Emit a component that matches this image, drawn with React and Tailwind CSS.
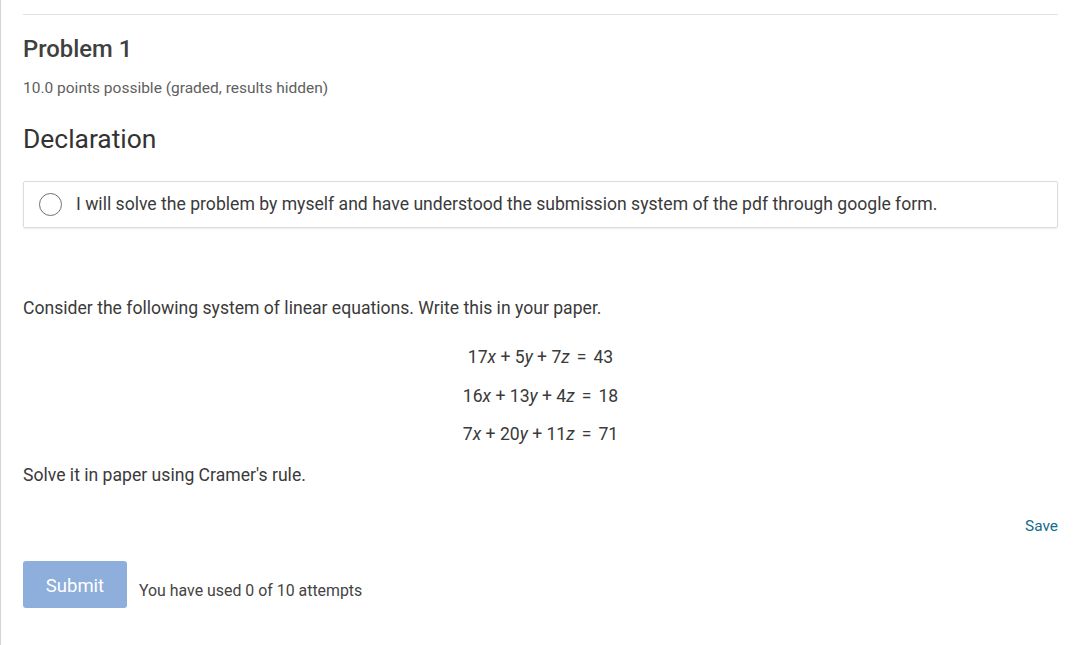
import React from "react";

const Equation = ({ terms, rhs }) => (
  <div className="flex items-baseline justify-center gap-[7px]">
    <span>{terms}</span>
    <span>=</span>
    <span>{rhs}</span>
  </div>
);

export default function App() {
  return (
    <div
      className="w-[1080px] h-[645px] bg-white border-l border-[#d4d4d4] overflow-hidden text-[#414141]"
      style={{ fontFamily: "Roboto, 'Liberation Sans', sans-serif" }}
    >
      <div className="mx-[22px] border-t border-[#e2e2e2] mt-[14px]">
        <h2 className="text-[23.8px] font-medium leading-none mt-[23px] text-[#404040]">
          Problem 1
        </h2>
        <div className="text-[15.5px] leading-none mt-[19px] text-[#606060]">
          10.0 points possible (graded, results hidden)
        </div>
        <h3 className="text-[26.4px] leading-none mt-[30px] text-[#333]">
          Declaration
        </h3>

        <label className="mt-[28px] flex items-center h-[47px] border border-[#dcdcdc] rounded-[2px] shadow-[0_1px_2px_rgba(0,0,0,0.08)] px-[15px]">
          <span className="w-[23px] h-[23px] rounded-full border border-[#707070] shrink-0" />
          <span className="ml-[14px] text-[17.6px] text-[#3a3a3a]">
            I will solve the problem by myself and have understood the submission system of the pdf through google form.
          </span>
        </label>

        <p className="text-[17.6px] leading-none mt-[72px] text-[#3a3a3a]">
          Consider the following system of linear equations. Write this in your paper.
        </p>

        <div className="mt-[30px] flex flex-col items-center gap-[18.5px] text-[17.6px] leading-[20px] text-[#3a3a3a]">
          <Equation
            terms={<>17<i>x</i> + 5<i>y</i> + 7<i>z</i></>}
            rhs="43"
          />
          <Equation
            terms={<>16<i>x</i> + 13<i>y</i> + 4<i>z</i></>}
            rhs="18"
          />
          <Equation
            terms={<>7<i>x</i> + 20<i>y</i> + 11<i>z</i></>}
            rhs="71"
          />
        </div>

        <p className="text-[17.6px] leading-none mt-[23px] text-[#3a3a3a]">
          Solve it in paper using Cramer's rule.
        </p>

        <div className="flex justify-end mt-[34px]">
          <button className="text-[15.4px] leading-none text-[#146b8c]">Save</button>
        </div>

        <div className="flex items-center mt-[27px]">
          <button className="w-[104px] h-[47px] pt-[4px] bg-[#8eaedb] rounded-[3px] text-white text-[18.5px]">
            Submit
          </button>
          <span className="ml-[12px] mt-[12px] text-[15.9px] text-[#444]">
            You have used 0 of 10 attempts
          </span>
        </div>
      </div>
    </div>
  );
}
